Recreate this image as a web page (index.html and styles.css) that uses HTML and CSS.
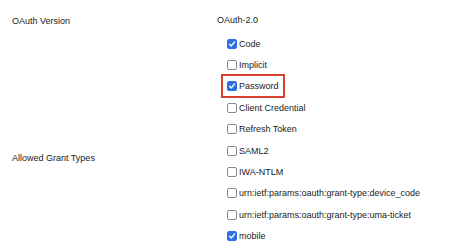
FILE: index.html
```html
<!DOCTYPE html>
<html lang="en">
<head>
    <meta charset="UTF-8">
    <title>OAuth Settings</title>
    <link rel="stylesheet" href="styles.css">
</head>
<body>
    <div class="form">
        <div class="row">
            <div class="label">OAuth Version</div>
            <div class="value version">OAuth-2.0</div>
        </div>
        <div class="row">
            <div class="label">Allowed Grant Types</div>
            <div class="value grants">
                <label class="grant"><span class="box checked"></span>Code</label>
                <label class="grant"><span class="box"></span>Implicit</label>
                <label class="grant highlight"><span class="box checked"></span>Password</label>
                <label class="grant"><span class="box"></span>Client Credential</label>
                <label class="grant"><span class="box"></span>Refresh Token</label>
                <label class="grant"><span class="box"></span>SAML2</label>
                <label class="grant"><span class="box"></span>IWA-NTLM</label>
                <label class="grant"><span class="box"></span>urn:ietf:params:oauth:grant-type:device_code</label>
                <label class="grant"><span class="box"></span>urn:ietf:params:oauth:grant-type:uma-ticket</label>
                <label class="grant"><span class="box checked"></span>mobile</label>
            </div>
        </div>
    </div>
</body>
</html>
```
FILE: styles.css
```css
body {
    margin: 0;
    background: #ffffff;
    color: #222222;
    font-family: "Liberation Sans", Arial, sans-serif;
    font-size: 9px;
    overflow: hidden;
}
.form {
    padding: 12px 0 0 12px;
}
.row {
    display: flex;
    align-items: center;
}
.label {
    width: 205px;
}
.version {
    line-height: 17px;
}
.grants {
    display: flex;
    flex-direction: column;
    padding: 4px 0 40px 10px;
}
.grant {
    display: flex;
    align-items: center;
    height: 21.4px;
    align-self: flex-start;
}
.box {
    width: 8px;
    height: 8px;
    border: 1px solid #8a8a8a;
    border-radius: 2px;
    margin-right: 2px;
    background: #fff;
}
.box.checked {
    border-color: #2b6fe0;
    background: #2b6fe0 url("data:image/svg+xml;utf8,<svg xmlns='http://www.w3.org/2000/svg' viewBox='0 0 10 10'><path d='M2 5.2 L4.2 7.4 L8.2 2.4' fill='none' stroke='white' stroke-width='1.8' stroke-linecap='round' stroke-linejoin='round'/></svg>") center/100% no-repeat;
}
.highlight {
    outline: 2px solid #d9412f;
    margin-left: -4px;
    padding: 0 4px;
    height: 20px;
    margin-top: 0;
    margin-bottom: 1.4px;
}
```
